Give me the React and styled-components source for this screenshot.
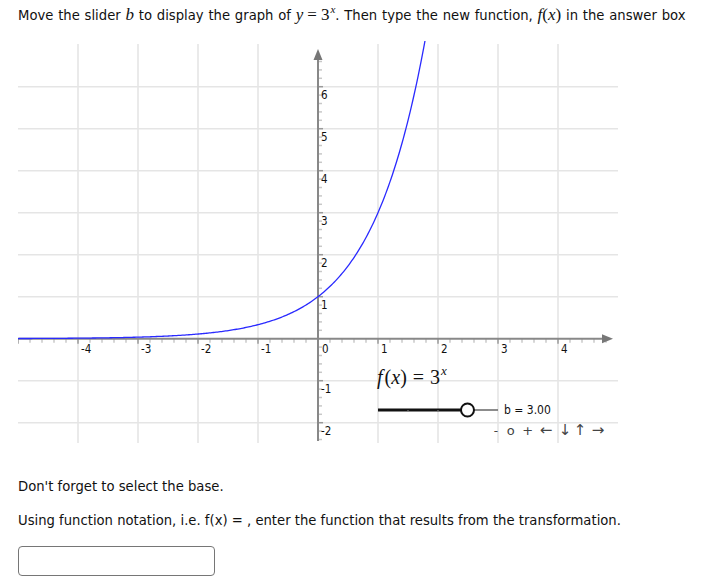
import React from "react";
import styled, { createGlobalStyle } from "styled-components";

const GlobalStyle = createGlobalStyle`
  html, body { margin: 0; padding: 0; background: #fff; }
  body { font-family: "DejaVu Sans", "Liberation Sans", sans-serif; color: #111; }
`;

const Page = styled.div`
  width: 712px;
  height: 582px;
  padding: 0 18px;
  box-sizing: border-box;
  overflow: hidden;
`;

const Prompt = styled.p`
  margin: 6px 0 0;
  font-size: 13.2px;
  line-height: 18px;
  white-space: nowrap;
  word-spacing: 0.6px;
`;

const MathText = styled.span`
  font-family: "Liberation Serif", "DejaVu Serif", serif;
  font-size: 17px;
  font-style: ${(p) => (p.$italic ? "italic" : "normal")};
  padding: 0 ${(p) => p.$pad || 0}px;
`;

const Sup = styled.sup`
  font-family: "Liberation Serif", serif;
  font-style: italic;
  font-size: 11px;
  vertical-align: 7px;
  line-height: 0;
  margin-left: 1px;
`;

const GraphBox = styled.div`
  margin-top: 16px;
  width: 602px;
  height: 405px;
`;

const Note = styled.p`
  margin: ${(p) => p.$mt}px 0 0;
  font-size: 13.2px;
  line-height: 18px;
  white-space: nowrap;
`;

const AnswerInput = styled.input`
  display: block;
  margin-top: 16px;
  width: 197px;
  height: 30px;
  box-sizing: border-box;
  border: 1px solid #767676;
  border-radius: 4px;
  background: #fff;
  outline: none;
`;

const X0 = 300; // svg x of origin
const Y0 = 297.7; // svg y of origin
const UX = 60;
const UY = 42;
const sx = (x) => X0 + UX * x;
const sy = (y) => Y0 - UY * y;
const log3 = (v) => Math.log(v) / Math.log(3);

function Graph() {
  const vLines = [-4, -3, -2, -1, 1, 2, 3, 4];
  const hLines = [-2, -1, 1, 2, 3, 4, 5, 6];
  const xTicks = [];
  for (let i = -25; i <= 24; i++) if (i !== 0) xTicks.push(i / 5);
  const yTicks = [];
  for (let i = -12; i <= 33; i++) if (i !== 0) yTicks.push(i / 5);

  const pts = [];
  const xmax = log3(7.1);
  for (let i = 0; i <= 300; i++) {
    const x = -5 + ((xmax + 5) * i) / 300;
    pts.push(`${sx(x).toFixed(2)},${sy(Math.pow(3, x)).toFixed(2)}`);
  }

  const controls = [
    ["-", 478, 12],
    ["o", 492.7, 13],
    ["+", 509.7, 13],
    ["←", 528, 15],
    ["↓", 547, 15],
    ["↑", 562, 15],
    ["→", 580, 15],
  ];

  return (
    <svg width="602" height="405" viewBox="0 0 602 405">
      {vLines.map((x) => (
        <line key={"v" + x} x1={sx(x)} x2={sx(x)} y1={3} y2={402} stroke="#e5e5e5" strokeWidth="1.6" />
      ))}
      {hLines.map((y) => (
        <line key={"h" + y} x1={0} x2={600} y1={sy(y)} y2={sy(y)} stroke="#e5e5e5" strokeWidth="1.6" />
      ))}
      {xTicks.map((x) => (
        <line
          key={"tx" + x}
          x1={sx(x)}
          x2={sx(x)}
          y1={Y0}
          y2={Y0 + (Number.isInteger(x) ? 5 : 4)}
          stroke={Number.isInteger(x) ? "#9a9a9a" : "#c8c8c8"}
          strokeWidth="1.5"
        />
      ))}
      {yTicks.map((y) => (
        <line
          key={"ty" + y}
          x1={X0}
          x2={X0 + (Number.isInteger(y) ? 5 : 4)}
          y1={sy(y)}
          y2={sy(y)}
          stroke={Number.isInteger(y) ? "#9a9a9a" : "#c8c8c8"}
          strokeWidth="1.5"
        />
      ))}
      <line x1={0} x2={590} y1={Y0} y2={Y0} stroke="#888" strokeWidth="2" />
      <polygon points={`${595},${Y0} ${584},${Y0 - 4.5} ${584},${Y0 + 4.5}`} fill="#777" />
      <line x1={X0} x2={X0} y1={400} y2={14} stroke="#888" strokeWidth="2" />
      <polygon points={`${X0},${8} ${X0 - 4.5},${19} ${X0 + 4.5},${19}`} fill="#777" />

      <g fontFamily='"DejaVu Sans Condensed", "DejaVu Sans", sans-serif' fontSize="11.5" fill="#111">
        {[-4, -3, -2, -1, 1, 2, 3, 4].map((x) => (
          <text key={"lx" + x} x={sx(x) + 3} y={Y0 + 14}>
            {x}
          </text>
        ))}
        <text x={X0 + 4} y={Y0 + 14}>0</text>
        {[-2, -1, 1, 2, 3, 4, 5, 6].map((y) => (
          <text key={"ly" + y} x={X0 + 3} y={sy(y) + 12}>
            {y}
          </text>
        ))}
      </g>

      <polyline points={pts.join(" ")} fill="none" stroke="#2a2aff" strokeWidth="1.3" />

      <text x={359} y={343} fontFamily='"Liberation Serif", serif' fontSize="20" fill="#111">
        <tspan fontStyle="italic">f</tspan>
        <tspan dx="2">(</tspan>
        <tspan fontStyle="italic">x</tspan>
        <tspan>)</tspan>
        <tspan dx="6">=</tspan>
        <tspan dx="6">3</tspan>
        <tspan fontStyle="italic" fontSize="13" dy="-9" dx="1">x</tspan>
      </text>

      <line x1={360} x2={450} y1={369} y2={369} stroke="#111" strokeWidth="3" />
      <line x1={455} x2={480} y1={369} y2={369} stroke="#666" strokeWidth="1.5" />
      <line x1={390} x2={390} y1={369} y2={371} stroke="#888" strokeWidth="1" />
      <line x1={420} x2={420} y1={369} y2={371} stroke="#888" strokeWidth="1" />
      <circle cx={449.5} cy={369} r={6.5} fill="#fff" stroke="#111" strokeWidth="2" />
      <text x={486} y={373} fontFamily='"DejaVu Sans Condensed", "DejaVu Sans", sans-serif' fontSize="12" fill="#111">
        b = 3.00
      </text>
      <g fontFamily='"DejaVu Sans", sans-serif' fill="#444" textAnchor="middle">
        {controls.map(([c, x, fs]) => (
          <text key={c} x={x} y={394} fontSize={fs}>
            {c}
          </text>
        ))}
      </g>
    </svg>
  );
}

export default function App() {
  return (
    <Page>
      <GlobalStyle />
      <Prompt>
        Move the slider <MathText $italic>b</MathText> to display the graph of <MathText $italic>y</MathText>
        <MathText $pad={4}>=</MathText>
        <MathText>3</MathText>
        <Sup>x</Sup>. Then type the new function, <MathText $italic>f</MathText>
        <MathText>(</MathText>
        <MathText $italic>x</MathText>
        <MathText>)</MathText> in the answer box
      </Prompt>
      <GraphBox>
        <Graph />
      </GraphBox>
      <Note $mt={32}>Don't forget to select the base.</Note>
      <Note $mt={16}>Using function notation, i.e. f(x) = , enter the function that results from the transformation.</Note>
      <AnswerInput type="text" aria-label="answer" />
    </Page>
  );
}
